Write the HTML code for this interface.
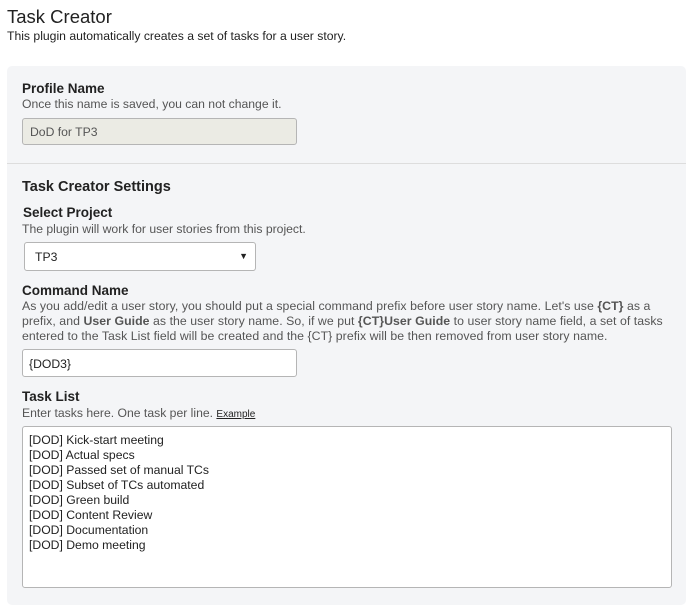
<!DOCTYPE html>
<html><head><style>
body{margin:0;width:694px;height:612px;background:#fff;font-family:"Liberation Sans",sans-serif;color:#333;position:relative;overflow:hidden}
.a{position:absolute;white-space:nowrap}
.h{font-size:13.5px;font-weight:bold;color:#222}
.d{font-size:12.2px;color:#555}
.panel{position:absolute;left:7px;top:66px;width:679px;height:539px;background:#f4f5f7;border-radius:5px}
.box{position:absolute;background:#fff;border:1px solid #b5b5b5;border-radius:3px;box-sizing:border-box;font-size:12.2px;color:#222}
</style></head><body>
<div class="a" style="left:7px;top:6px;font-size:18.5px;color:#222">Task Creator</div>
<div class="a" style="left:7px;top:29px;font-size:12.2px;color:#222">This plugin automatically creates a set of tasks for a user story.</div>
<div class="panel"></div>
<div class="a h" style="left:22px;top:81px">Profile Name</div>
<div class="a d" style="left:22px;top:97px">Once this name is saved, you can not change it.</div>
<div class="box" style="left:22px;top:118px;width:275px;height:27px;background:#ebebe4;color:#555;padding:6px 0 0 7px">DoD for TP3</div>
<div class="a" style="left:7px;top:163px;width:679px;height:1px;background:#ddd"></div>
<div class="a" style="left:22px;top:179px;font-size:14.5px;font-weight:bold;color:#222">Task Creator Settings</div>
<div class="a h" style="left:23px;top:205px">Select Project</div>
<div class="a d" style="left:22px;top:222px">The plugin will work for user stories from this project.</div>
<div class="box" style="left:24px;top:242px;width:232px;height:29px;padding:7px 0 0 10px">TP3<span style="position:absolute;right:7px;top:8px;font-size:9px">▼</span></div>
<div class="a h" style="left:22px;top:283px">Command Name</div>
<div class="a d" style="left:22px;top:299px;line-height:15px;font-size:12.3px;letter-spacing:0.05px">As you add/edit a user story, you should put a special command prefix before user story name. Let's use <b>{CT}</b> as a<br>prefix, and <b>User Guide</b> as the user story name. So, if we put <b>{CT}User Guide</b> to user story name field, a set of tasks<br>entered to the Task List field will be created and the {CT} prefix will be then removed from user story name.</div>
<div class="box" style="left:22px;top:349px;width:275px;height:28px;padding:7px 0 0 6px">{DOD3}</div>
<div class="a h" style="left:22px;top:389px">Task List</div>
<div class="a d" style="left:22px;top:406px">Enter tasks here. One task per line. <span style="font-size:10px;color:#222;text-decoration:underline">Example</span></div>
<div class="box" style="left:22px;top:426px;width:650px;height:162px;padding:6px 0 0 6px;line-height:15px">[DOD] Kick-start meeting<br>[DOD] Actual specs<br>[DOD] Passed set of manual TCs<br>[DOD] Subset of TCs automated<br>[DOD] Green build<br>[DOD] Content Review<br>[DOD] Documentation<br>[DOD] Demo meeting</div>
</body></html>
